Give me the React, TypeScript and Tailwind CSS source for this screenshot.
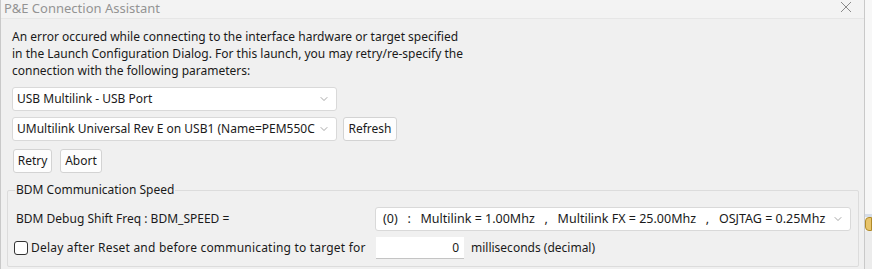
import { ChevronDown } from 'lucide-react'

function Combo({ text, className }: { text: string; className: string }) {
  return (
    <div className={`flex items-center h-[24px] bg-white border border-[#d9d9d9] rounded-[3px] pl-[4px] pr-[6px] ${className}`}>
      <span className="flex-1 overflow-hidden whitespace-nowrap">{text}</span>
      <ChevronDown className="w-[12px] h-[12px] text-[#777]" strokeWidth={1.3} />
    </div>
  )
}

function Button({ label, className }: { label: string; className: string }) {
  return (
    <div className={`flex items-center justify-center h-[24px] bg-[#fdfdfd] border border-[#d3d3d3] rounded-[3px] ${className}`}>
      {label}
    </div>
  )
}

export default function App() {
  return (
    <div className="w-[872px] h-[269px] flex bg-[#f3f3f3] text-[12px] text-[#1a1a1a] font-['Noto_Sans',sans-serif] overflow-hidden">
      {/* dialog window */}
      <div className="w-[865px] h-full flex flex-col border-l border-r border-[#c9c9c9]">
        <div className="h-[19px] flex items-start justify-between bg-[#f3f3f3] border-b border-[#e6e6e6] pl-[3px] pr-[12px]">
          <span className="text-[#939393] text-[13px] leading-[16px]">P&amp;E Connection Assistant</span>
          <svg className="w-[12px] h-[12px] mt-[1px]" viewBox="0 0 12 12" stroke="#8a8a8a" strokeWidth="1">
            <path d="M1 1l10 10M11 1L1 11" />
          </svg>
        </div>

        <div className="flex-1 bg-[#f0f0f0] pl-[11px] pr-[5px] pt-[9px]">
          <p className="leading-[17px]">
            An error occured while connecting to the interface hardware or target specified<br />
            in the Launch Configuration Dialog. For this launch, you may retry/re-specify the<br />
            connection with the following parameters:
          </p>

          <Combo text="USB Multilink - USB Port" className="w-[325px] mt-[8px]" />

          <div className="flex items-center gap-[6px] mt-[6px]">
            <Combo text="UMultilink Universal Rev E on USB1 (Name=PEM550C" className="w-[325px]" />
            <Button label="Refresh" className="w-[54px]" />
          </div>

          <div className="flex items-center gap-[8px] mt-[8px] pl-[1px]">
            <Button label="Retry" className="w-[39px]" />
            <Button label="Abort" className="w-[42px]" />
          </div>

          {/* group box */}
          <div className="relative mt-[17px] -ml-[5px] border border-[#dcdcdc] rounded-[2px] h-[77px] pl-[8px] pr-[7px]">
            <span className="absolute -top-[10px] left-[7px] px-[1px] bg-[#f0f0f0] leading-[17px]">BDM Communication Speed</span>

            <div className="flex items-center justify-between mt-[16px]">
              <span>BDM Debug Shift Freq : BDM_SPEED =</span>
              <div className="flex items-center w-[476px] h-[24px] bg-white border border-[#d9d9d9] rounded-[3px] pl-[7px] pr-[6px]">
                <span className="flex-1 whitespace-pre text-[12.5px]">(0)   :   Multilink = 1.00Mhz   ,   Multilink FX = 25.00Mhz   ,   OSJTAG = 0.25Mhz</span>
                <ChevronDown className="w-[12px] h-[12px] text-[#777]" strokeWidth={1.3} />
              </div>
            </div>

            <div className="flex items-center mt-[6px] -ml-[2px]">
              <div className="w-[14px] h-[14px] border border-[#333] rounded-[3px] bg-white mr-[3px] shrink-0" />
              <span className="w-[345px] whitespace-nowrap tracking-[0.2px]">Delay after Reset and before communicating to target for</span>
              <div className="w-[88px] h-[22px] bg-white border-b border-[#c4c4c4] flex items-center justify-end pr-[5px]">0</div>
              <span className="ml-[7px] whitespace-nowrap">milliseconds (decimal)</span>
            </div>
          </div>
        </div>
      </div>

      {/* background behind the dialog */}
      <div className="flex-1 flex flex-col bg-[#f7f7f7]">
        <div className="h-[214px]" />
        <div className="h-[3px] bg-[#d6dde8]" />
        <div className="h-[14px] bg-[#e8c46a] rounded-l-[4px] border border-[#b08a2a]" />
        <div className="flex-1 bg-[#ececec]" />
      </div>
    </div>
  )
}
